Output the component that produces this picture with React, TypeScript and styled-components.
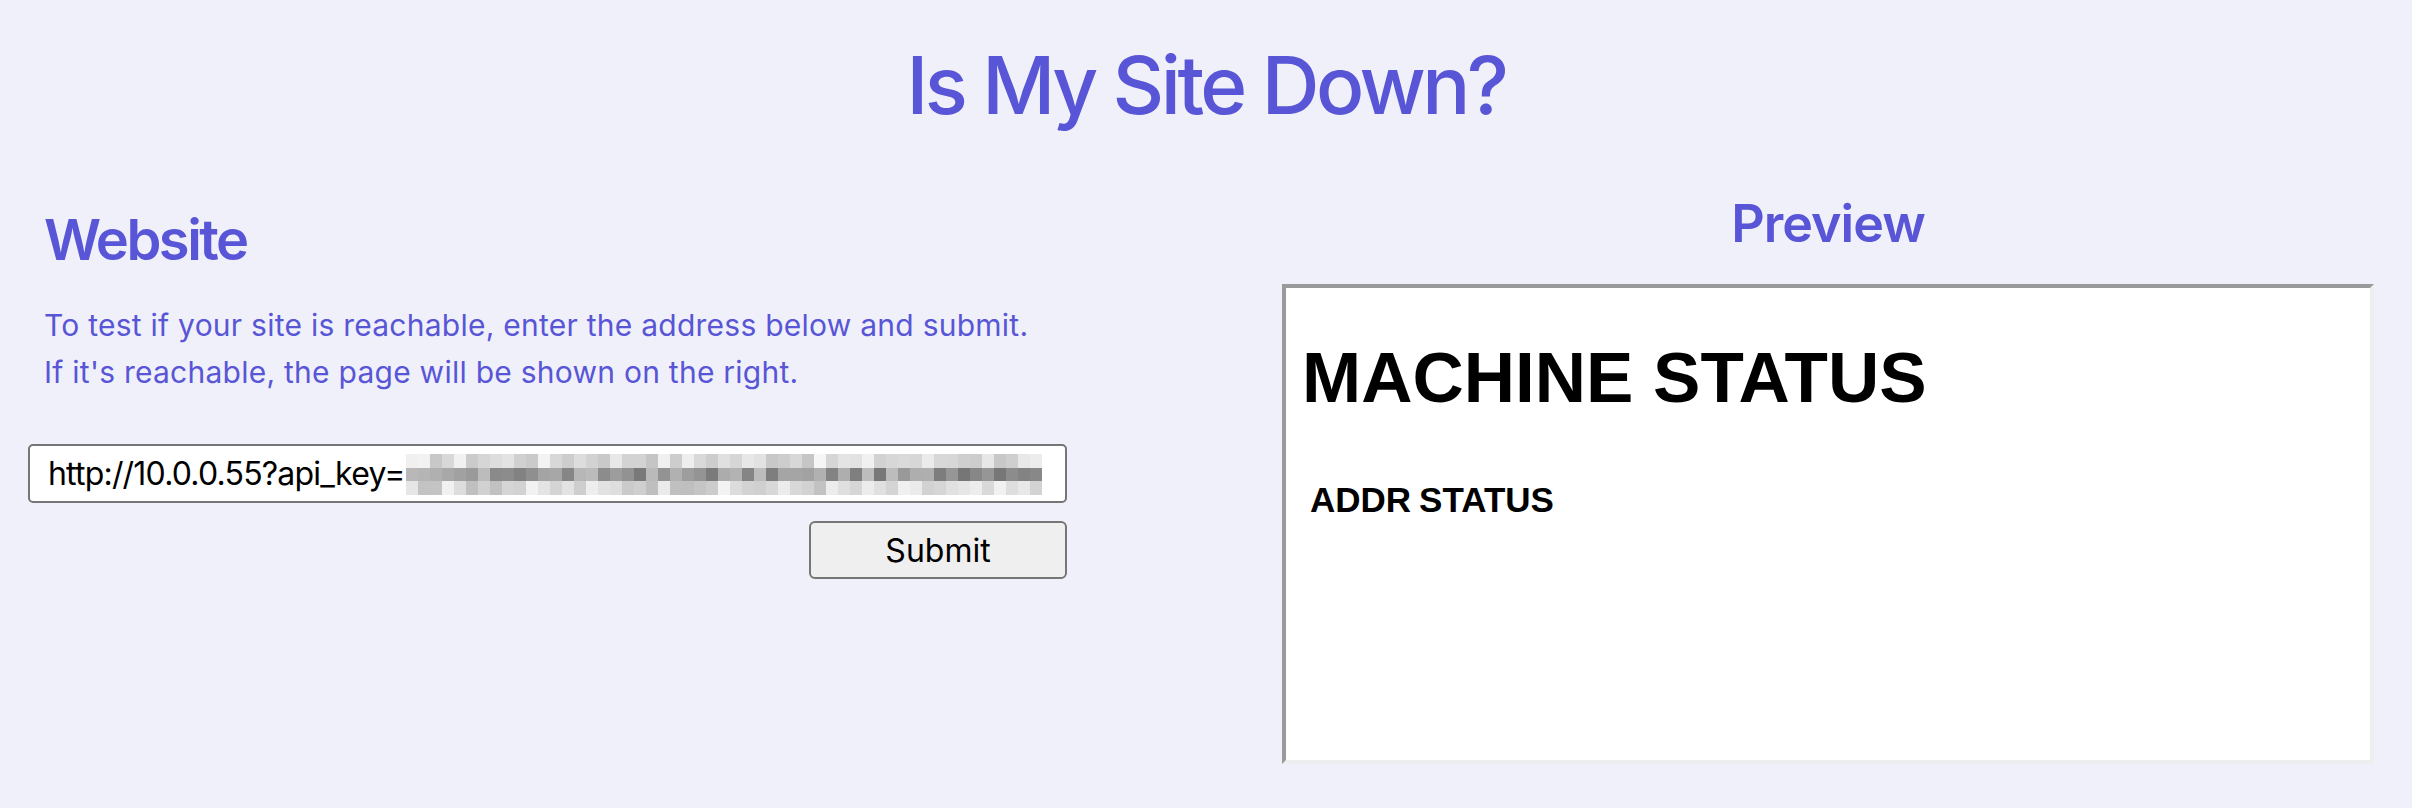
import React from "react";
import styled, { createGlobalStyle } from "styled-components";

const GlobalStyle = createGlobalStyle`
  html, body {
    margin: 0;
    padding: 0;
    background: #f0f0fa;
  }
  body {
    font-family: Inter, "Noto Sans", sans-serif;
  }
`;

const INDIGO = "#5856d6";

// fake pixelated api key, seeded so it's stable between renders
function makeRedaction(cols: number) {
  let seed = 17;
  const rand = () => {
    seed = (seed * 9301 + 49297) % 233280;
    return seed / 233280;
  };
  const rows: string[][] = [];
  const ranges = [
    [196, 246],
    [118, 190],
    [190, 244],
  ];
  for (let r = 0; r < ranges.length; r++) {
    const [lo, hi] = ranges[r];
    const row: string[] = [];
    for (let c = 0; c < cols; c++) {
      const v = Math.round(lo + rand() * (hi - lo));
      row.push(`rgb(${v},${v},${v})`);
    }
    rows.push(row);
  }
  return rows;
}

const redaction = makeRedaction(53);

export default function App() {
  return (
    <>
      <GlobalStyle />
      <Header>
        <Title>Is My Site Down?</Title>
      </Header>
      <Main>
        <LeftColumn>
          <SectionTitle>Website</SectionTitle>
          <Intro>
            To test if your site is reachable, enter the address below and
            submit.
            <br />
            If it's reachable, the page will be shown on the right.
          </Intro>
          <UrlField>
            <UrlText>http://10.0.0.55?api_key=</UrlText>
            <Redacted>
              {redaction.map((row, r) => (
                <RedactedRow key={r}>
                  {row.map((shade, c) => (
                    <RedactedCell key={c} style={{ background: shade }} />
                  ))}
                </RedactedRow>
              ))}
            </Redacted>
          </UrlField>
          <SubmitButton type="button">Submit</SubmitButton>
        </LeftColumn>
        <RightColumn>
          <PreviewTitle>Preview</PreviewTitle>
          <PreviewFrame>
            <FrameHeading>MACHINE STATUS</FrameHeading>
            <StatusTable>
              <thead>
                <tr>
                  <StatusHead>ADDR</StatusHead>
                  <StatusHead>STATUS</StatusHead>
                </tr>
              </thead>
            </StatusTable>
          </PreviewFrame>
        </RightColumn>
      </Main>
    </>
  );
}

const Header = styled.header`
  height: 172px;
  box-sizing: border-box;
  padding-top: 37px;
  display: flex;
  justify-content: center;
`;

const Title = styled.h1`
  margin: 0;
  font-size: 80px;
  line-height: 96px;
  font-weight: 500;
  color: ${INDIGO};
  letter-spacing: -3.5px;
`;

const Main = styled.main`
  display: flex;
  justify-content: space-between;
  padding: 0 38px 0 28px;
`;

const LeftColumn = styled.section`
  width: 1039px;
  display: flex;
  flex-direction: column;
  padding-top: 35px;
`;

const SectionTitle = styled.h2`
  margin: 0;
  padding-left: 16px;
  font-size: 56px;
  line-height: 67px;
  font-weight: 600;
  letter-spacing: -2.5px;
  color: ${INDIGO};
`;

const Intro = styled.p`
  margin: 28px 0 0;
  padding-left: 16px;
  font-size: 30px;
  line-height: 47px;
  letter-spacing: 0.25px;
  color: ${INDIGO};
`;

const UrlField = styled.div`
  margin-top: 48px;
  height: 59px;
  box-sizing: border-box;
  border: 2px solid #767676;
  border-radius: 5px;
  background: #ffffff;
  padding: 0 18px;
  display: flex;
  align-items: center;
  overflow: hidden;
`;

const UrlText = styled.span`
  font-size: 32px;
  color: #000000;
  white-space: nowrap;
  letter-spacing: -0.8px;
`;

const Redacted = styled.span`
  display: flex;
  flex-direction: column;
  height: 41px;
  margin-left: 1px;
  margin-top: 2px;
`;

const RedactedRow = styled.span`
  display: flex;
  flex: 1;
`;

const RedactedCell = styled.span`
  width: 12px;
  height: 100%;
`;

const SubmitButton = styled.button`
  align-self: flex-end;
  margin-top: 18px;
  width: 258px;
  height: 58px;
  box-sizing: border-box;
  border: 2px solid #767676;
  border-radius: 6px;
  background: #efefef;
  font-family: Inter, "Noto Sans", sans-serif;
  font-size: 32px;
  color: #000000;
  padding: 0;
`;

const RightColumn = styled.section`
  width: 1092px;
  display: flex;
  flex-direction: column;
  align-items: center;
  padding-top: 21px;
`;

const PreviewTitle = styled.h2`
  margin: 0;
  font-size: 52px;
  line-height: 62px;
  font-weight: 600;
  letter-spacing: -1px;
  color: ${INDIGO};
`;

const PreviewFrame = styled.div`
  margin-top: 29px;
  width: 1092px;
  height: 480px;
  box-sizing: border-box;
  border: 4px solid;
  border-color: #9a9a9a #eeeeee #eeeeee #9a9a9a;
  background: #ffffff;
  padding: 0 16px;
  align-self: stretch;
  font-family: "Liberation Sans", Arial, sans-serif;
  color: #000000;
`;

const FrameHeading = styled.h1`
  margin: 50px 0 0;
  font-size: 71px;
  line-height: 80px;
  font-weight: 700;
`;

const StatusTable = styled.table`
  margin: 62px 0 0 4px;
  border-spacing: 0;
`;

const StatusHead = styled.th`
  padding: 0 4px;
  font-size: 35px;
  line-height: 40px;
  font-weight: 700;
  text-align: left;
`;
